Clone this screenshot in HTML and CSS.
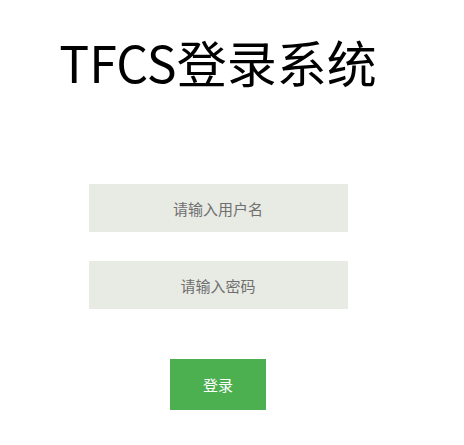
FILE: index.html
```html
<!DOCTYPE html>
<html lang="zh-CN">
    <head>
        <meta charset="UTF-8">
        <meta name="viewport" content="width=device-width, initial-scale=1.0">
        <link rel="stylesheet" href="styles.css">
        <title>TFCS登录系统</title>
    </head>
    <body>
        <div class="login">
            <h1 class="login-title">TFCS登录系统</h1>
            <form class="login-form" onsubmit="return false;">
                <input class="login-input" type="text" name="username" placeholder="请输入用户名">
                <input class="login-input" type="password" name="password" placeholder="请输入密码">
                <button class="login-button" type="submit">登录</button>
            </form>
        </div>
    </body>
</html>
```

FILE: styles.css
```css
 body {
     margin: 0;
     background-color: #fff;
     font-family: "Noto Sans CJK SC", "Noto Sans", sans-serif;
 }

 .login {
     width: 436px;
     display: flex;
     flex-direction: column;
     align-items: center;
 }

 .login-title {
     margin: 31px 0 0 0;
     font-size: 50px;
     line-height: 60px;
     font-weight: normal;
     color: #000;
 }

 .login-form {
     margin-top: 93px;
     display: flex;
     flex-direction: column;
     align-items: center;
 }

 .login-input {
     box-sizing: border-box;
     width: 259px;
     height: 48px;
     margin-bottom: 29px;
     border: none;
     outline: none;
     background-color: #e8eae4;
     text-align: center;
     font-family: inherit;
     font-size: 15px;
     color: #333;
 }

 .login-input::placeholder {
     color: #6f6f6f;
 }

 .login-button {
     width: 96px;
     height: 51px;
     margin-top: 21px;
     border: none;
     background-color: #4caf50;
     color: #fff;
     font-family: inherit;
     font-size: 15px;
     cursor: pointer;
 }
```
